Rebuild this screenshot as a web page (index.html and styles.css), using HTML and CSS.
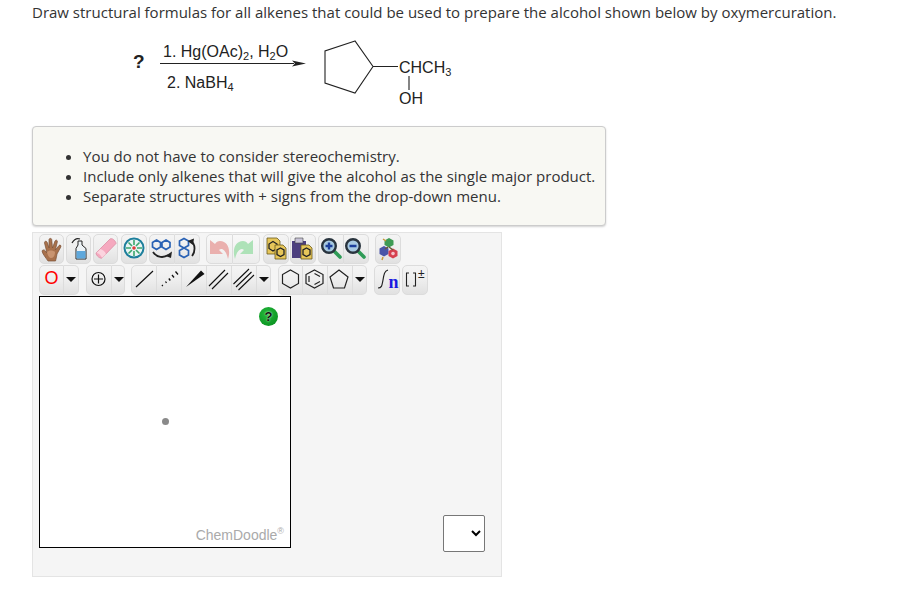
FILE: index.html
```html
<!DOCTYPE html>
<html lang="en">
<head>
<meta charset="utf-8">
<title>Oxymercuration question</title>
<link rel="stylesheet" href="styles.css">
</head>
<body>
<main class="page">
  <p class="question">Draw structural formulas for all alkenes that could be used to prepare the alcohol shown below by oxymercuration.</p>

  <svg class="reaction" width="480" height="100" viewBox="0 0 480 100">
    <text class="rx bold" x="101" y="40">?</text>
    <text class="rx" x="131" y="29">1. Hg(OAc)<tspan class="sub" dy="3">2</tspan><tspan dy="-3">, H</tspan><tspan class="sub" dy="3">2</tspan><tspan dy="-3">O</tspan></text>
    <path class="line" d="M128 35.500H262"/>
    <path class="head" d="M260 32.500L274 35.500L260 38.500L263 35.500Z"/>
    <text class="rx" x="135" y="60">2. NaBH<tspan class="sub" dy="3">4</tspan></text>
    <path class="line" d="M323 13L293 23V55L323 65L341 38.500ZM341 38.500H366M377 48V62"/>
    <text class="rx" x="367" y="45">CHCH<tspan class="sub" dy="3">3</tspan></text>
    <text class="rx" x="367" y="76">OH</text>
  </svg>

  <section class="notice">
    <ul class="hints">
      <li>You do not have to consider stereochemistry.</li>
      <li>Include only alkenes that will give the alcohol as the single major product.</li>
      <li>Separate structures with + signs from the drop-down menu.</li>
    </ul>
  </section>

  <section class="panel">
    <div class="editor">
      <div class="toolbar">
        <button class="tool" aria-label="Pan">
          <svg width="25" height="30" viewBox="0 0 25 30"><path d="M9 28C7 25 3.500 21 3 18C3.500 16.500 5.500 16.500 6.500 18L8 20L5.500 10C5.300 8 7.500 7.500 8.300 9.500L10 15L10 6.500C10.300 5 12.500 5 12.700 6.500L13.500 15L16 8C16.800 6.500 18.700 7 18.300 9L16.300 17L20 12.500C21 11.500 22.500 12.500 21.800 14L18 21C17.500 24 17 26 16.500 28Z" fill="#a8714c" stroke="#7a5037" stroke-width=".7"/><path d="M8 19C10 17 14 17 16 19C16 22 15 25 12 25C10 25 8.500 22 8 19Z" fill="#c99470"/></svg>
        </button>
        <button class="tool gap-2" aria-label="Clear">
          <svg width="25" height="30" viewBox="0 0 25 30"><path d="M6 10C8 6.500 11 5 14 6" fill="none" stroke="#222" stroke-width="1.300"/><path d="M12 8H16V12L20 15.500V26H10V15.500L12 12Z" fill="#eef3f6" stroke="#222" stroke-width="1"/><path d="M10.500 18H19.500V25.500H10.500Z" fill="#5fa8dc"/></svg>
        </button>
        <button class="tool gap-2" aria-label="Erase">
          <svg width="25" height="30" viewBox="0 0 25 30"><path d="M3 20L17 6C19 4.500 23 8 23 10.500L9 25C7 26 3 22.500 3 20Z" fill="#f5a9bf" stroke="#dc8ea5" stroke-width=".8"/><path d="M3.500 20C5.500 20 8 22.500 9 25L13 21C12 18.500 9.500 16.500 7.500 16Z" fill="#fbd3de"/></svg>
        </button>
        <button class="tool w26 gap-3" aria-label="Center">
          <svg width="26" height="30" viewBox="0 0 26 30"><circle cx="13" cy="15" r="9.500" fill="#e9f4f4" stroke="#1d7f9c" stroke-width="2"/><path d="M13 7V12M13 18V23M5 15H10M16 15H21M7.500 9.500L11 13M18.500 9.500L15 13M7.500 20.500L11 17M18.500 20.500L15 17" stroke="#3aa76d" stroke-width="1.600"/><circle cx="13" cy="15" r="1.800" fill="#e23b3b"/></svg>
        </button>
        <div class="group gap-2">
          <button class="tool w26" aria-label="Flip horizontally">
            <svg width="26" height="30" viewBox="0 0 26 30"><path d="M7.500 7L11.500 9.500V14L7.500 16.500L3.500 14V9.500ZM17 7L21 9.500V14L17 16.500L13 14V9.500Z" fill="none" stroke="#2a62b5" stroke-width="1.700"/><path d="M4 19C8 25 15 25 19 22" fill="none" stroke="#222" stroke-width="1.800"/><path d="M23 18.500L22 25L16.500 23Z" fill="#222"/></svg>
          </button>
          <button class="tool" aria-label="Flip vertically">
            <svg width="25" height="30" viewBox="0 0 25 30"><path d="M10 5.500L14.500 8V12.500L10 15L5.500 12.500V8ZM10 15L14.500 17.500V22L10 24.500L5.500 22V17.500Z" fill="none" stroke="#2a62b5" stroke-width="1.700"/><path d="M17 8C21.500 11 21.500 19 18 23" fill="none" stroke="#222" stroke-width="1.800"/><path d="M13.500 8L20 5.500L19 12Z" fill="#222"/></svg>
          </button>
        </div>
        <div class="group gap-6 faded">
          <button class="tool w27" aria-label="Undo">
            <svg width="27" height="30" viewBox="0 0 27 30"><path d="M4 7L4 21L17 21L13 17C16 14.500 20 17 22 26C25 17 22 8 14 8C12 8 10 9 9 11Z" fill="#eab0ae"/></svg>
          </button>
          <button class="tool w27" aria-label="Redo">
            <svg width="27" height="30" viewBox="0 0 27 30"><path d="M21 7L21 21L8 21L12 17C9 14.500 5 17 3 26C0 17 3 8 11 8C13 8 15 9 16 11Z" fill="#aee2b8"/></svg>
          </button>
        </div>
        <button class="tool w26 gap-3" aria-label="Copy">
          <svg width="26" height="30" viewBox="0 0 26 30"><path d="M4 5H14L17 8V21H4Z" fill="#e6c65a" stroke="#6b5a1c" stroke-width=".8"/><path d="M10 8.500L14 11V15.500L10 18L6 15.500V11Z" fill="none" stroke="#222" stroke-width="1.300"/><path d="M12 12H20L23 15V26H12Z" fill="#e6c65a" stroke="#6b5a1c" stroke-width=".8"/><path d="M17.500 15L21 17V21.500L17.500 23.500L14 21.500V17Z" fill="none" stroke="#222" stroke-width="1.300"/></svg>
        </button>
        <button class="tool w26 gap-1" aria-label="Paste">
          <svg width="26" height="30" viewBox="0 0 26 30"><path d="M2 8H16V25H2Z" fill="#4c3f7f"/><path d="M5 5H13V10H5Z" fill="#c8c3d8" stroke="#444" stroke-width=".6"/><path d="M11 12H19L22 15V26H11Z" fill="#e6c65a" stroke="#6b5a1c" stroke-width=".8"/><path d="M16.500 15L20 17V21.500L16.500 23.500L13 21.500V17Z" fill="none" stroke="#222" stroke-width="1.300"/></svg>
        </button>
        <div class="group gap-2">
          <button class="tool w26" aria-label="Zoom in">
            <svg width="26" height="30" viewBox="0 0 26 30"><path d="M16 18L22 24" stroke="#2f9b57" stroke-width="3.600" stroke-linecap="round"/><circle cx="11" cy="13" r="6.800" fill="#a9cbe2" stroke="#29343e" stroke-width="2.400"/><path d="M7.500 13H14.500M11 9.500V16.500" stroke="#1c3f9b" stroke-width="2.400"/></svg>
          </button>
          <button class="tool" aria-label="Zoom out">
            <svg width="25" height="30" viewBox="0 0 25 30"><path d="M15 18L21 24" stroke="#2f9b57" stroke-width="3.600" stroke-linecap="round"/><circle cx="10" cy="13" r="6.800" fill="#a9cbe2" stroke="#29343e" stroke-width="2.400"/><path d="M6.500 13H13.500" stroke="#1c3f9b" stroke-width="2.400"/></svg>
          </button>
        </div>
        <button class="tool w26 gap-6" aria-label="Templates">
          <svg width="26" height="30" viewBox="0 0 26 30"><path d="M14 5L18.500 7.500V12L14 14.500L9.500 12V7.500Z" fill="#3f9b55"/><path d="M9 13L13.500 15.500V21L9 23.500L4.500 21V15.500Z" fill="#4a55a8"/><path d="M18 15.500L22.500 18V23L18 25.500L13.500 23V18Z" fill="#d63f4e"/><circle cx="18" cy="20.500" r="1.800" fill="#f3c0c8"/><path d="M13 14L10 16M14 14L18 17" stroke="#6a5a3a" stroke-width="1.500"/><path d="M8 24L7 27M11 8L8 6" stroke="#c99a3a" stroke-width="1.500"/></svg>
        </button>
      </div>

      <div class="toolbar">
        <div class="group">
          <button class="tool atom" aria-label="Atom label">O</button>
          <button class="tool caret" aria-label="More atoms"></button>
        </div>
        <div class="group gap-7">
          <button class="tool w26" aria-label="Charge">
            <svg width="26" height="30" viewBox="0 0 26 30"><circle cx="12.500" cy="15" r="6.500" fill="none" stroke="#111" stroke-width="1.200"/><path d="M8 15H17M12.500 10.500V19.500" stroke="#111" stroke-width="1.200"/></svg>
          </button>
          <button class="tool caret w13" aria-label="More charges"></button>
        </div>
        <div class="group gap-6">
          <button class="tool w26" aria-label="Single bond">
            <svg width="26" height="30" viewBox="0 0 26 30"><path d="M5 23L22 7" stroke="#111" stroke-width="1.100"/></svg>
          </button>
          <button class="tool" aria-label="Hashed bond">
            <svg width="25" height="30" viewBox="0 0 25 30"><path d="M6 21L6.800 22M9.500 17.500L10.500 19M12.800 14.500L14.300 16.500M16 11L18 13.500M19.500 7.500L22 10.500" stroke="#111" stroke-width="1.300"/></svg>
          </button>
          <button class="tool" aria-label="Wedge bond">
            <svg width="25" height="30" viewBox="0 0 25 30"><path d="M5 23L20 6.500L23.500 10Z" fill="#111"/></svg>
          </button>
          <button class="tool" aria-label="Double bond">
            <svg width="25" height="30" viewBox="0 0 25 30"><path d="M3 22L19 6M6 25L22 9" stroke="#111" stroke-width="1.100"/></svg>
          </button>
          <button class="tool" aria-label="Triple bond">
            <svg width="25" height="30" viewBox="0 0 25 30"><path d="M2.500 20L18 5M5 23L20.500 8M7.500 26L23 11" stroke="#111" stroke-width="1.100"/></svg>
          </button>
          <button class="tool caret w14" aria-label="More bonds"></button>
        </div>
        <div class="group gap-7">
          <button class="tool" aria-label="Cyclohexane">
            <svg width="25" height="30" viewBox="0 0 25 30"><path d="M12.500 6L20.500 10.500V19.500L12.500 24L4.500 19.500V10.500Z" fill="none" stroke="#222" stroke-width="1.200"/></svg>
          </button>
          <button class="tool" aria-label="Benzene">
            <svg width="25" height="30" viewBox="0 0 25 30"><path d="M12.500 6L21 10.500V19.500L12.500 24L4 19.500V10.500Z" fill="none" stroke="#222" stroke-width="1.200"/><path d="M7 12V18M12.500 9.500L18 12.500M12.500 20.500L18 17.500" stroke="#222" stroke-width="1.200"/></svg>
          </button>
          <button class="tool" aria-label="Cyclopentane">
            <svg width="25" height="30" viewBox="0 0 25 30"><path d="M12 6L21 13L17.500 24H6.500L3 13Z" fill="none" stroke="#222" stroke-width="1.200"/></svg>
          </button>
          <button class="tool caret w14" aria-label="More rings"></button>
        </div>
        <button class="tool w26 gap-7" aria-label="Repeating group">
          <svg width="26" height="30" viewBox="0 0 26 30"><path d="M4 24C8 24 8 21 9 16C10 10 10.500 7 14 6" fill="none" stroke="#222" stroke-width="1.200"/><text class="sn" x="14.500" y="24">n</text></svg>
        </button>
        <button class="tool w26 gap-2" aria-label="Brackets">
          <svg width="26" height="30" viewBox="0 0 26 30"><path d="M7 9H4.500V22H7M11 9H13.500V22H11" fill="none" stroke="#222" stroke-width="1.100"/><text class="pm" x="16" y="14">±</text></svg>
        </button>
      </div>
    </div>

    <div class="workspace">
      <div class="canvas">
        <span class="help">?</span>
        <span class="dot"></span>
        <span class="brand">ChemDoodle<sup class="reg">®</sup></span>
      </div>
      <select class="separator" aria-label="Separator">
        <option></option>
        <option>+</option>
      </select>
    </div>
  </section>
</main>
</body>
</html>
```

FILE: styles.css
```css
* { box-sizing: border-box; }

html, body { margin: 0; background: #fff; }

.page {
  padding: 0 0 0 32px;
  font-family: "Open Sans", sans-serif;
  color: #333;
  width: 921px;
  height: 596px;
  overflow: hidden;
}

.question {
  margin: 0;
  padding-top: 2px;
  font-size: 15px;
  line-height: 20px;
  white-space: nowrap;
}

.reaction { display: block; margin-top: 6px; }

.rx {
  font-family: "Liberation Sans", Arial, sans-serif;
  font-size: 16px;
  fill: #222;
}
.bold { font-weight: 700; font-size: 19px; }
.sub { font-size: 11px; }
.line { fill: none; stroke: #222; stroke-width: 1.100; }
.head { fill: #222; }

.notice {
  width: 574px;
  height: 100px;
  margin-top: -2px;
  background: #f8f8f3;
  border: 1px solid #ccc;
  border-radius: 4px;
  box-shadow: 0 1px 2px rgba(0, 0, 0, .18);
  padding-top: 19px;
}

.hints {
  margin: 0;
  padding-left: 50px;
  font-size: 15px;
  line-height: 20px;
  white-space: nowrap;
}

.panel {
  width: 470px;
  height: 345px;
  margin-top: 6px;
  background: #f5f5f5;
  border: 1px solid #e4e4e4;
  display: flex;
  flex-direction: column;
  padding: 1px 0 0 6px;
}

.editor { display: flex; flex-direction: column; }

.toolbar { display: flex; height: 31px; }

.group {
  display: flex;
  border-radius: 5px;
}

.tool {
  display: block;
  width: 25px;
  height: 30px;
  padding: 0;
  margin: 0;
  border: 1px solid #dcdcdc;
  border-radius: 5px;
  background: linear-gradient(#f4f4f4, #eeeeee 50%, #e1e1e1);
  flex: none;
  overflow: hidden;
}

.tool svg { display: block; margin: -3px 0 0 -1px; }

.group .tool { border-radius: 0; border-left-width: 0; }
.group .tool:first-child { border-radius: 5px 0 0 5px; border-left-width: 1px; }
.group .tool:last-child { border-radius: 0 5px 5px 0; }

.gap-1 { margin-left: 1px; }
.gap-2 { margin-left: 2px; }
.gap-3 { margin-left: 3px; }
.gap-6 { margin-left: 6px; }
.gap-7 { margin-left: 7px; }

.faded .tool { background: linear-gradient(#f8f8f8, #f3f3f3 50%, #ececec); }

.atom {
  color: #f00;
  font-family: "Liberation Sans", Arial, sans-serif;
  font-size: 18px;
  line-height: 24px;
  padding-bottom: 4px;
}

.caret {
  width: 15px;
  position: relative;
}
.caret::after {
  content: "";
  position: absolute;
  left: 2px;
  top: 11px;
  border-style: solid;
  border-width: 5px 5px 0;
  border-color: #111 transparent transparent;
}

.w13 { width: 13px; }
.w14 { width: 14px; }
.w26 { width: 26px; }
.w27 { width: 27px; }

.sn {
  font-family: "Liberation Serif", serif;
  font-weight: 700;
  font-size: 18px;
  fill: #1a1ae0;
}
.pm {
  font-family: "Liberation Sans", sans-serif;
  font-size: 12px;
  fill: #222;
}

.workspace {
  display: flex;
  align-items: flex-end;
  justify-content: space-between;
  padding-right: 16px;
}

.canvas {
  position: relative;
  width: 252px;
  height: 252px;
  background: #fff;
  border: 1px solid #000;
  flex: none;
}

.help {
  position: absolute;
  left: 219px;
  top: 10px;
  width: 19px;
  height: 19px;
  border-radius: 50%;
  background: radial-gradient(circle at 40% 35%, #22b83a, #068a1c);
  color: #111;
  font: 700 13px/19px "Liberation Sans", sans-serif;
  text-shadow: 0 0 2px #fff;
  text-align: center;
}

.dot {
  position: absolute;
  left: 122px;
  top: 121px;
  width: 7px;
  height: 7px;
  border-radius: 50%;
  background: #8a8a8a;
}

.brand {
  position: absolute;
  right: 6px;
  bottom: 3px;
  color: #aaa;
  font: 14px/18px "Liberation Sans", sans-serif;
}
.reg { font-size: 9px; line-height: 0; }

.separator {
  width: 42px;
  height: 37px;
  margin-bottom: -4px;
  background: #fff;
  border: 1px solid #777;
  border-radius: 2px;
  font-family: "Open Sans", sans-serif;
  font-size: 15px;
}
```
